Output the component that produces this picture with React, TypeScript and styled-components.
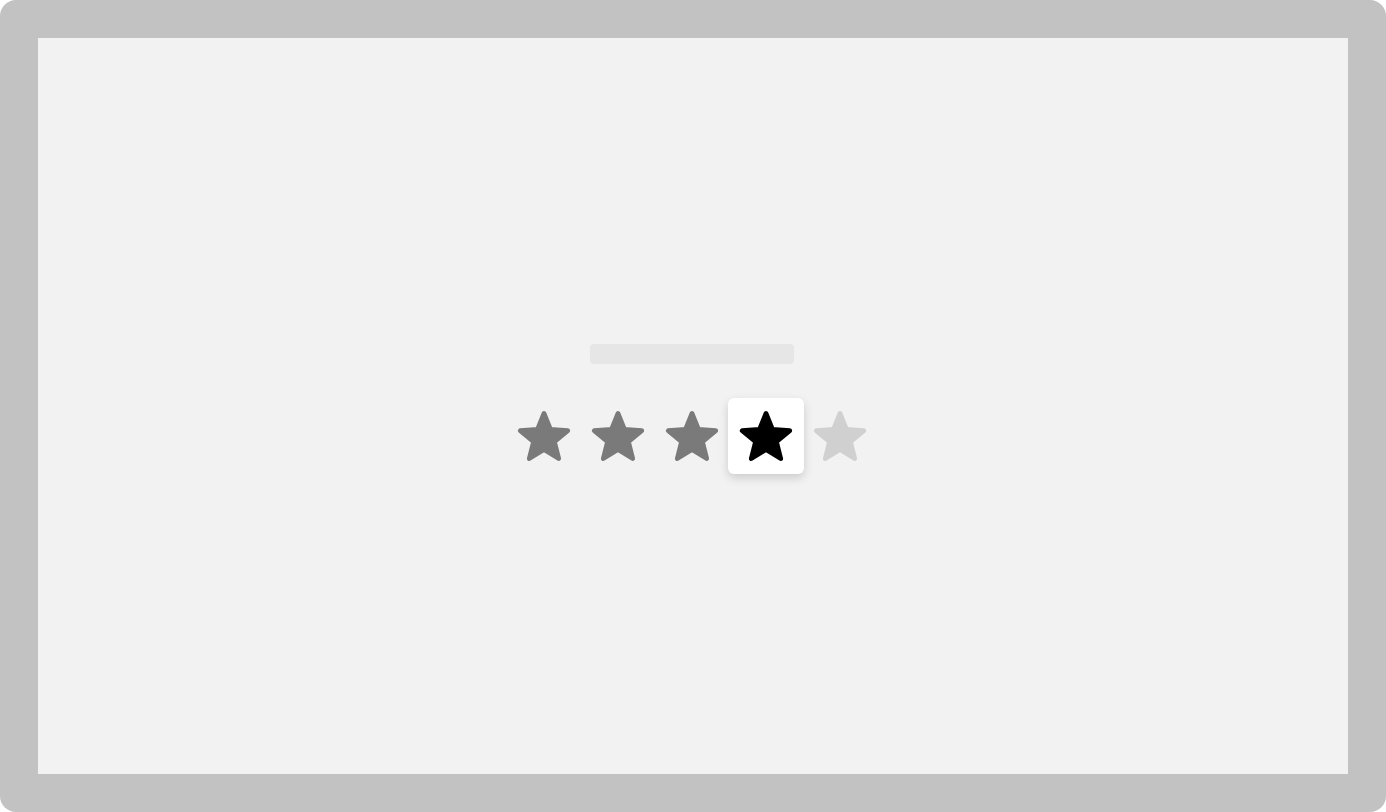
import React, { useState } from 'react';
import styled, { createGlobalStyle } from 'styled-components';

const GlobalStyle = createGlobalStyle`
  html, body {
    margin: 0;
    padding: 0;
    background: #ffffff;
    font-family: "Inter", "Liberation Sans", sans-serif;
  }
`;

const Frame = styled.div`
  box-sizing: border-box;
  width: 1386px;
  height: 812px;
  padding: 38px;
  background: #c2c2c2;
  border-radius: 16px;
  display: flex;
`;

const Stage = styled.main`
  flex: 1;
  background: #f2f2f2;
  display: flex;
  flex-direction: column;
  align-items: center;
  justify-content: center;
  gap: 34px;
  padding: 6px 2px 0 0;
`;

const LabelPlaceholder = styled.div`
  width: 204px;
  height: 20px;
  border-radius: 4px;
  background: #e6e6e6;
`;

const Rating = styled.div`
  display: flex;
  align-items: center;
`;

const StarButton = styled.button<{ $focused?: boolean }>`
  width: 76px;
  height: 76px;
  padding: 0;
  border: none;
  border-radius: 6px;
  display: flex;
  align-items: center;
  justify-content: center;
  cursor: pointer;
  background: ${({ $focused }) => ($focused ? '#ffffff' : 'transparent')};
  box-shadow: ${({ $focused }) =>
    $focused ? '0 4px 10px rgba(0, 0, 0, 0.16)' : 'none'};

  & + & {
    margin-left: -2px;
  }
`;

type Tone = 'filled' | 'active' | 'empty';

const toneColor: Record<Tone, string> = {
  filled: '#7a7a7a',
  active: '#000000',
  empty: '#d0d0d0',
};

// five point star, tips rounded by a round stroke join
const starPoints = (() => {
  const cx = 12;
  const cy = 12.955;
  const outer = 10;
  const inner = outer * 0.44;
  const pts: string[] = [];
  for (let i = 0; i < 10; i++) {
    const r = i % 2 === 0 ? outer : inner;
    const a = (-90 + i * 36) * (Math.PI / 180);
    pts.push(`${(cx + r * Math.cos(a)).toFixed(3)},${(cy + r * Math.sin(a)).toFixed(3)}`);
  }
  return pts.join(' ');
})();

const Star: React.FC<{ tone: Tone }> = ({ tone }) => (
  <svg width={60} height={60} viewBox="0 0 24 24" aria-hidden="true">
    <polygon
      points={starPoints}
      fill={toneColor[tone]}
      stroke={toneColor[tone]}
      strokeWidth={1.9}
      strokeLinejoin="round"
    />
  </svg>
);

const App: React.FC = () => {
  const [value, setValue] = useState(4);

  return (
    <>
      <GlobalStyle />
      <Frame>
        <Stage>
          <LabelPlaceholder />
          <Rating role="radiogroup">
            {[1, 2, 3, 4, 5].map((n) => {
              const tone: Tone = n === value ? 'active' : n < value ? 'filled' : 'empty';
              return (
                <StarButton
                  key={n}
                  role="radio"
                  aria-checked={n === value}
                  aria-label={`${n} star${n > 1 ? 's' : ''}`}
                  $focused={n === value}
                  onClick={() => setValue(n)}
                >
                  <Star tone={tone} />
                </StarButton>
              );
            })}
          </Rating>
        </Stage>
      </Frame>
    </>
  );
};

export default App;
